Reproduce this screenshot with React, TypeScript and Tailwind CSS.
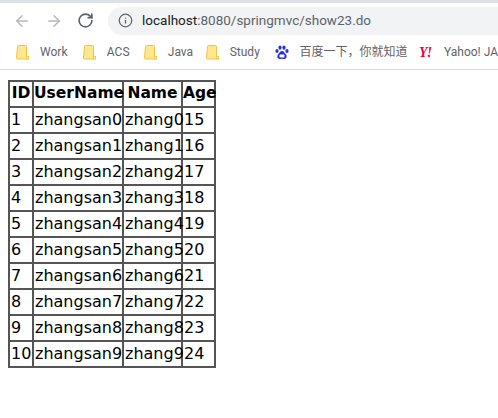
import React from "react";
import { ArrowLeft, ArrowRight, RotateCw, Info } from "lucide-react";

const rows = Array.from({ length: 10 }, (_, i) => ({
  id: i + 1,
  userName: `zhangsan${i}`,
  name: `zhang${i}`,
  age: 15 + i,
}));

function FolderIcon() {
  return (
    <svg width="13" height="15" viewBox="0 0 13 15" className="shrink-0">
      <path d="M1.5 1.5a1 1 0 0 1 1-1h7a1 1 0 0 1 1 1v10h2v2.5h-11a1 1 0 0 1-1-1z" fill="#fee78f" stroke="#eec643" />
      <path d="M10.5 11.5h2v2.5h-2z" fill="#fff" stroke="#eec643" />
    </svg>
  );
}

function BaiduIcon() {
  return (
    <svg width="14" height="15" viewBox="0 0 14 15" className="shrink-0">
      <ellipse cx="2" cy="6" rx="1.6" ry="2" fill="#2932e1" />
      <ellipse cx="5" cy="2.6" rx="1.6" ry="2.2" fill="#2932e1" />
      <ellipse cx="9" cy="2.6" rx="1.6" ry="2.2" fill="#2932e1" />
      <ellipse cx="12" cy="6" rx="1.6" ry="2" fill="#2932e1" />
      <path d="M7 6c2 0 2.500 2 4 3.500 1.500 2 .5 4.500-2 4.500-1 0-1.300-.3-2-.3s-1 .3-2 .3c-2.500 0-3.500-2.500-2-4.500C4.500 8 5 6 7 6z" fill="#2932e1" />
      <rect x="4.500" y="9.500" width="5" height="3" rx="1" fill="#fff" />
    </svg>
  );
}

function Bookmark({ icon, label, className }: { icon: React.ReactNode; label: string; className: string }) {
  return (
    <div className={`flex items-center ${className}`}>
      {icon}
      <span className="ml-[11px] whitespace-nowrap">{label}</span>
    </div>
  );
}

export default function App() {
  return (
    <div className="w-[498px] h-[418px] overflow-hidden bg-white font-['Roboto','Noto_Sans_CJK_SC',sans-serif]">
      <div className="h-[3px] bg-[#dee1e6]" />
      <div className="flex items-center h-[32px] pt-[3px]">
        <ArrowLeft className="ml-[13px] w-[18px] h-[18px] text-[#b6b8bb]" strokeWidth={2} />
        <ArrowRight className="ml-[14px] w-[18px] h-[18px] text-[#b6b8bb]" strokeWidth={2} />
        <RotateCw className="ml-[14px] w-[17px] h-[17px] text-[#5f6368]" strokeWidth={2.4} />
        <div className="ml-[14px] flex items-center flex-1 h-[28px] rounded-l-[14px] bg-[#f1f3f4] pl-[10px]">
          <Info className="w-[15px] h-[15px] text-[#5f6368]" strokeWidth={2} />
          <span className="ml-[9px] text-[13.5px] text-[#5f6368] whitespace-nowrap">
            <span className="text-[#202124]">localhost</span>:8080/springmvc/show23.do
          </span>
        </div>
      </div>
      <div className="flex items-center h-[35px] pl-[16px] text-[12px] text-[#5f6368] border-b border-[#d9dadc] overflow-hidden">
        <Bookmark icon={<FolderIcon />} label="Work" className="w-[68px]" />
        <Bookmark icon={<FolderIcon />} label="ACS" className="w-[62px]" />
        <Bookmark icon={<FolderIcon />} label="Java" className="w-[63px]" />
        <Bookmark icon={<FolderIcon />} label="Study" className="w-[70px]" />
        <Bookmark icon={<BaiduIcon />} label="百度一下，你就知道" className="w-[147px]" />
        <div className="flex items-center">
          <span className="font-['Liberation_Serif',serif] font-bold italic text-[#e6003c] text-[14px] w-[17px] tracking-tighter">Y!</span>
          <span className="ml-[8px] whitespace-nowrap">Yahoo! JA</span>
        </div>
      </div>
      <div className="pt-[10px] pl-[8px]">
        <table className="border border-[#555] border-separate border-spacing-0 font-['DejaVu_Sans',sans-serif] text-[16px] text-black table-fixed w-[208px]">
          <thead>
            <tr className="h-[26px]">
              <th className="w-[24px] border border-[#555] p-0 text-[15.5px] font-bold">ID</th>
              <th className="w-[90px] border border-[#555] p-0 text-[15.5px] font-bold">UserName</th>
              <th className="w-[59px] border border-[#555] p-0 text-[15.5px] font-bold">Name</th>
              <th className="border border-[#555] p-0 text-[15.5px] font-bold">Age</th>
            </tr>
          </thead>
          <tbody>
            {rows.map((row) => (
              <tr key={row.id} className="h-[26px]">
                <td className="border border-[#555] p-0 pl-[1px]">{row.id}</td>
                <td className="border border-[#555] p-0 pl-[1px]">{row.userName}</td>
                <td className="border border-[#555] p-0 pl-[1px]">{row.name}</td>
                <td className="border border-[#555] p-0 pl-[1px]">{row.age}</td>
              </tr>
            ))}
          </tbody>
        </table>
      </div>
    </div>
  );
}
